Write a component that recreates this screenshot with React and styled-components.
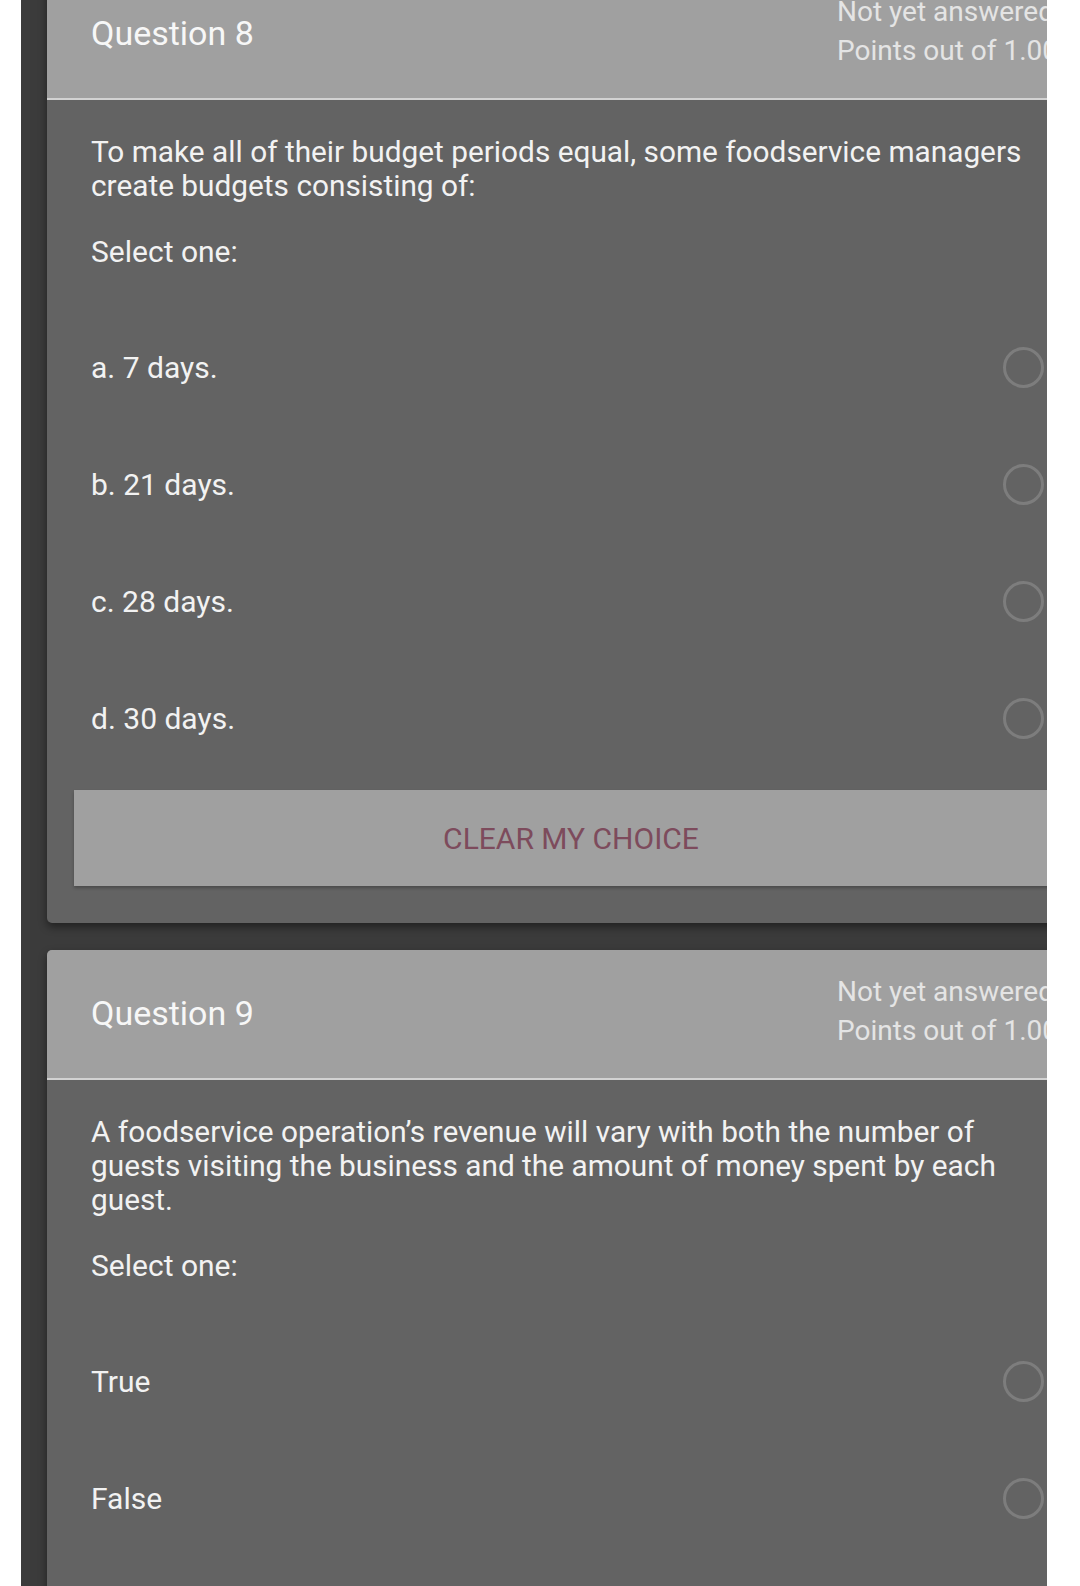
import React from "react";
import styled, { createGlobalStyle } from "styled-components";

const Global = createGlobalStyle`
  html, body { margin: 0; padding: 0; background: #ffffff; }
  body { font-family: Roboto, "Noto Sans", "Liberation Sans", sans-serif; -webkit-font-smoothing: antialiased; }
`;

const Frame = styled.div`
  width: 1047px;
  height: 1586px;
  overflow: hidden;
`;

const Strip = styled.div`
  margin-left: 21px;
  min-height: 1700px;
  background: #3b3b3b;
  padding-left: 26px;
  display: flex;
  flex-direction: column;
  gap: 27px;
`;

const Card = styled.section`
  width: 1048px;
  background: #636363;
  border-radius: 5px;
  box-shadow: 0 4px 8px rgba(0, 0, 0, 0.45);
  margin-top: ${(p) => (p.$first ? "-30px" : "0")};
`;

const Header = styled.header`
  height: 128px;
  background: #a0a0a0;
  border-bottom: 2px solid #d2d2d2;
  border-radius: 5px 5px 0 0;
  display: flex;
  align-items: center;
  padding-left: 44px;
`;

const Title = styled.h3`
  flex: 1;
  margin: 0;
  font-size: 34px;
  font-weight: 400;
  color: #f7f7f7;
  position: relative;
  top: -1px;
`;

const Info = styled.div`
  width: 258px;
  display: flex;
  flex-direction: column;
  gap: 5px;
  font-size: 28px;
  line-height: 34px;
  color: #e4e4e4;
  white-space: nowrap;
  position: relative;
  top: -3px;
`;

const Body = styled.div`
  padding: 35px 51px 37px 44px;
`;

const Prompt = styled.p`
  margin: 0;
  font-size: 29.8px;
  line-height: 34px;
  color: #f2f2f2;
  white-space: nowrap;
`;

const SelectLabel = styled.p`
  margin: 32px 0 40px;
  font-size: 30px;
  line-height: 34px;
  color: #f2f2f2;
`;

const Option = styled.label`
  height: 117px;
  display: flex;
  align-items: center;
  justify-content: space-between;
  font-size: 30px;
  color: #f2f2f2;
`;

const Radio = styled.span`
  width: 35px;
  height: 35px;
  border: 3px solid #7d7d7d;
  border-radius: 50%;
  flex-shrink: 0;
`;

const ClearButton = styled.button`
  display: block;
  width: calc(100% + 41px);
  margin: 13px -24px 0 -17px;
  height: 96px;
  border: none;
  background: #a0a0a0;
  box-shadow: 0 2px 3px rgba(0, 0, 0, 0.25);
  font-family: inherit;
  font-size: 30px;
  color: #7d4b5c;
  text-transform: uppercase;
  letter-spacing: 0;
`;

function Question({ num, prompt, options, first, clear }) {
  return (
    <Card $first={first}>
      <Header>
        <Title>Question {num}</Title>
        <Info>
          <span>Not yet answered</span>
          <span>Points out of 1.00</span>
        </Info>
      </Header>
      <Body>
        {prompt.map((l, i) => (
          <Prompt key={i}>{l}</Prompt>
        ))}
        <SelectLabel>Select one:</SelectLabel>
        {options.map((o) => (
          <Option key={o}>
            <span>{o}</span>
            <Radio />
          </Option>
        ))}
        {clear && <ClearButton>Clear my choice</ClearButton>}
      </Body>
    </Card>
  );
}

export default function App() {
  return (
    <>
      <Global />
      <Frame>
        <Strip>
          <Question
            first
            clear
            num={8}
            prompt={[
              "To make all of their budget periods equal, some foodservice managers",
              "create budgets consisting of:",
            ]}
            options={["a. 7 days.", "b. 21 days.", "c. 28 days.", "d. 30 days."]}
          />
          <Question
            num={9}
            prompt={[
              "A foodservice operation’s revenue will vary with both the number of",
              "guests visiting the business and the amount of money spent by each",
              "guest.",
            ]}
            options={["True", "False"]}
          />
        </Strip>
      </Frame>
    </>
  );
}
